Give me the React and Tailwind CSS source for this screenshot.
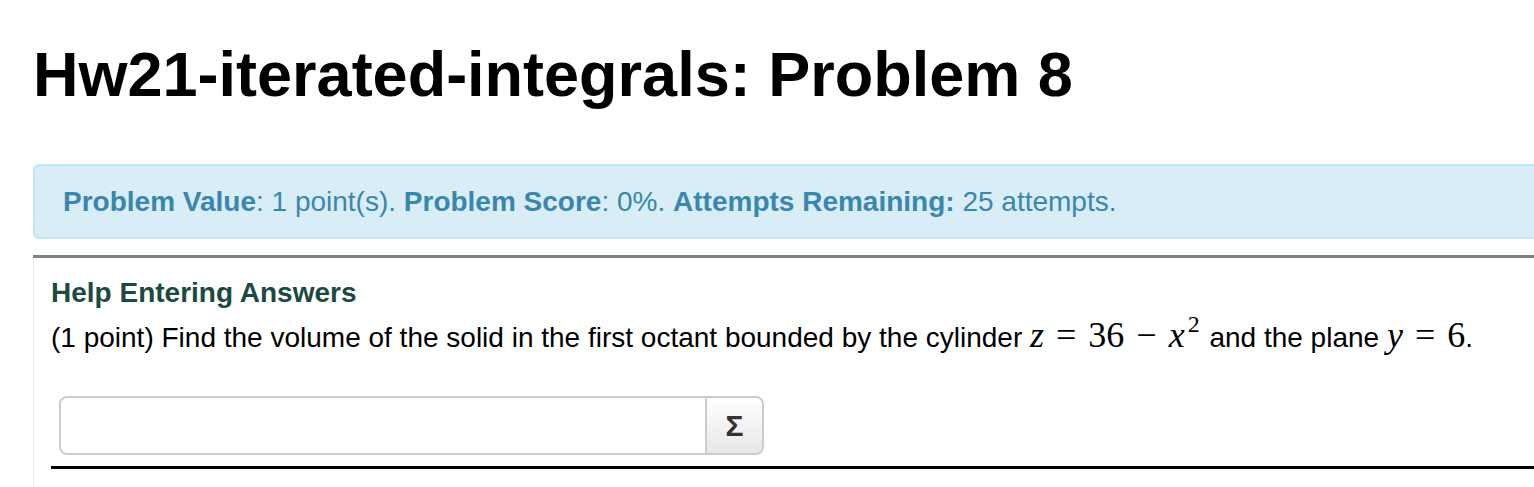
import React from 'react';

const MathVar = ({ children }) => (
  <span className="italic" style={{ fontFamily: '"Liberation Serif", serif' }}>{children}</span>
);

export default function App() {
  return (
    <div className="min-h-[487px] bg-white overflow-hidden" style={{ fontFamily: '"Liberation Sans", Arial, sans-serif' }}>
      {/* Title */}
      <h1 className="pl-[33px] pt-[38px] text-[63px] leading-[72px] font-bold text-black whitespace-nowrap">
        Hw21-iterated-integrals: Problem 8
      </h1>

      {/* Problem info alert */}
      <div className="ml-[33px] mt-[54px] w-[1520px] h-[75px] flex items-center pl-[28px] bg-[#d9edf7] border-2 border-[#bce8f1] rounded-[6px] text-[#3a87ad] text-[28px] whitespace-nowrap">
        <span>
          <b>Problem Value</b>: 1 point(s). <b>Problem Score</b>: 0%. <b>Attempts Remaining:</b> 25 attempts.
        </span>
      </div>

      {/* Problem body */}
      <div className="ml-[33px] mt-[16px] border-t-[3px] border-[#808080]">
        <div className="border-l border-[#eeeeee] pl-[17px] pt-[18px] pb-[20px]">
          <div className="text-[28px] leading-[34px] font-bold text-[#1a4a40]">Help Entering Answers</div>
          <p className="mt-[8px] text-[28px] leading-[34px] text-black whitespace-nowrap">
            (1 point) Find the volume of the solid in the first octant bounded by the cylinder{' '}
            <span className="text-[36px] leading-[34px]" style={{ fontFamily: '"Liberation Serif", serif' }}>
              <MathVar>z</MathVar>
              <span className="mx-[12px]">=</span>36
              <span className="mx-[12px]">−</span>
              <MathVar>x</MathVar>
              <sup className="text-[24px] relative -top-[15px] ml-[3px] mr-[2px]">2</sup>
            </span>{' '}
            and the plane{' '}
            <span className="text-[36px] leading-[34px]" style={{ fontFamily: '"Liberation Serif", serif' }}>
              <MathVar>y</MathVar>
              <span className="mx-[12px]">=</span>6
            </span>
            .
          </p>

          <div className="mt-[41px] ml-[8px] flex h-[59px]">
            <input
              type="text"
              className="w-[648px] h-full border-2 border-[#cccccc] rounded-l-[8px] px-3 text-[24px] outline-none"
            />
            <button className="w-[57px] h-full border-2 border-l-0 border-[#cccccc] rounded-r-[8px] bg-gradient-to-b from-white to-[#e6e6e6] flex items-center justify-center text-[30px] font-bold text-[#333333]">
              Σ
            </button>
          </div>

          <div className="mt-[11px] border-t-[3px] border-black" />
        </div>
      </div>
    </div>
  );
}
